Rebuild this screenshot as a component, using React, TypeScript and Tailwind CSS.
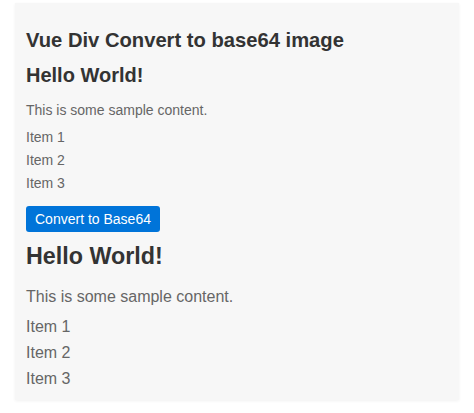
const items = ["Item 1", "Item 2", "Item 3"];

function Content({ large }: { large?: boolean }) {
  if (large) {
    return (
      <div>
        <h2 className="text-[23.3px] font-bold leading-[28px] text-[#333]">Hello World!</h2>
        <p className="mt-[14px] text-[16px] leading-[26px] text-[#666]">This is some sample content.</p>
        <ul className="mt-[4px]">
          {items.map((item) => (
            <li key={item} className="text-[16px] leading-[26px] text-[#666]">
              {item}
            </li>
          ))}
        </ul>
      </div>
    );
  }
  return (
    <div>
      <h3 className="text-[20px] font-bold leading-[24px] text-[#333]">Hello World!</h3>
      <p className="mt-[12px] text-[14px] leading-[23px] text-[#666]">This is some sample content.</p>
      <ul className="mt-[4px]">
        {items.map((item) => (
          <li key={item} className="text-[14px] leading-[23px] text-[#666]">
            {item}
          </li>
        ))}
      </ul>
    </div>
  );
}

export default function App() {
  return (
    <div className="min-h-[413px] bg-white pt-[3px] font-['Liberation_Sans',Arial,sans-serif]">
      <div className="mx-[15px] w-[444px] bg-[#f7f7f7] px-[11px] pt-[25px] pb-[8px] shadow-[0_1px_3px_rgba(0,0,0,0.06)]">
        <h1 className="text-[20.2px] font-bold leading-[24px] text-[#333]">Vue Div Convert to base64 image</h1>
        <div className="mt-[11px]">
          <Content />
        </div>
        <button className="mt-[11px] rounded-[3px] bg-[#0074d9] px-[9px] py-[3px] text-[14px] leading-[20px] text-white">
          Convert to Base64
        </button>
        <div className="mt-[10px]">
          <Content large />
        </div>
      </div>
    </div>
  );
}
